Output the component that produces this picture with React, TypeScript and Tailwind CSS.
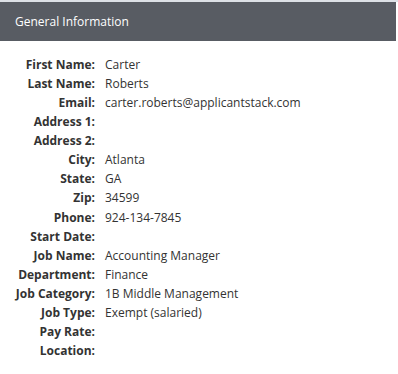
const rows: [string, string][] = [
  ["First Name:", "Carter"],
  ["Last Name:", "Roberts"],
  ["Email:", "carter.roberts@applicantstack.com"],
  ["Address 1:", ""],
  ["Address 2:", ""],
  ["City:", "Atlanta"],
  ["State:", "GA"],
  ["Zip:", "34599"],
  ["Phone:", "924-134-7845"],
  ["Start Date:", ""],
  ["Job Name:", "Accounting Manager"],
  ["Department:", "Finance"],
  ["Job Category:", "1B Middle Management"],
  ["Job Type:", "Exempt (salaried)"],
  ["Pay Rate:", ""],
  ["Location:", ""],
]

export default function App() {
  return (
    <div className="h-[374px] w-[398px] bg-white font-['Open_Sans',sans-serif] text-[#333]">
      <div className="h-[2px] bg-[#dde1e6]" />
      <div className="mr-[2px] flex h-[39px] items-center bg-[#585c63] px-[15px] text-[12px] text-white">
        General Information
      </div>
      <div className="grid grid-cols-[95px_1fr] gap-x-[10px] pt-[14px] text-[12px] leading-[19.07px]">
        {rows.map(([label, value]) => (
          <div key={label} className="contents">
            <div className="text-right font-bold text-[#333]">{label}</div>
            <div className="text-[#333]">{value}</div>
          </div>
        ))}
      </div>
    </div>
  )
}
